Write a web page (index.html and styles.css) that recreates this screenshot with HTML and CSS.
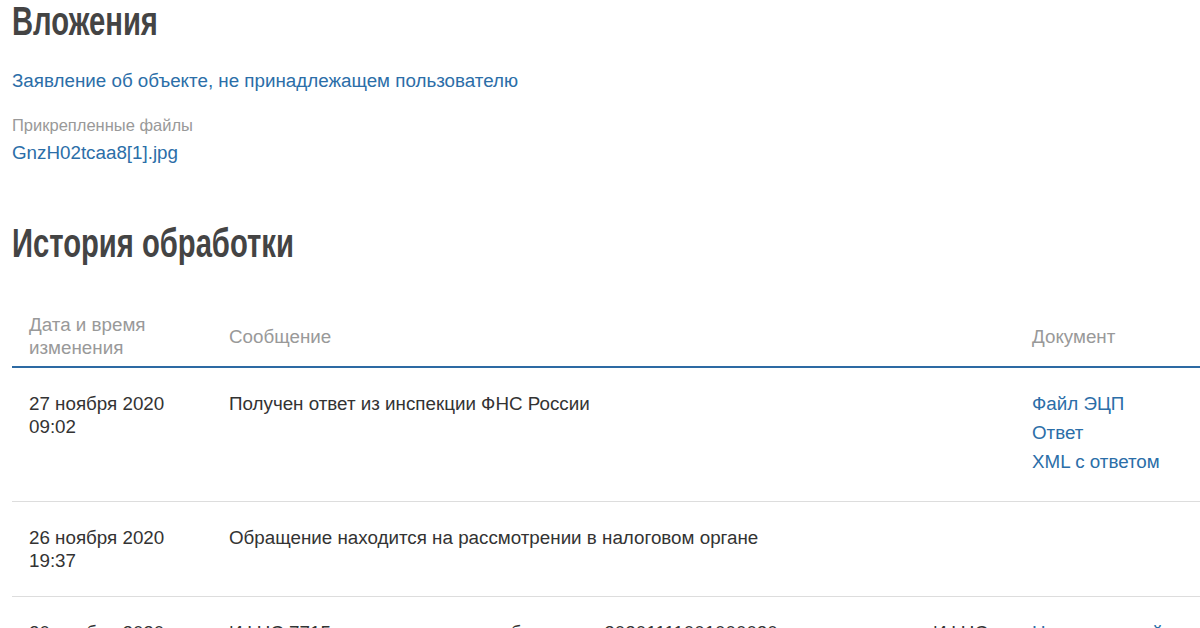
FILE: index.html
```html
<!DOCTYPE html>
<html>
	<head>
		<meta charset="utf-8">
		<title>Вложения</title>
		<link rel="stylesheet" href="styles.css">
	</head>
	<body>
		<div class="page">
			<h2 class="title"><span>Вложения</span></h2>
			<a class="link subject" href="#">Заявление об объекте, не принадлежащем пользователю</a>
			<div class="label">Прикрепленные файлы</div>
			<a class="link" href="#">GnzH02tcaa8[1].jpg</a>

			<h2 class="title history"><span>История обработки</span></h2>
			<table class="log">
				<colgroup>
					<col class="col-date">
					<col class="col-msg">
					<col class="col-doc">
				</colgroup>
				<thead>
					<tr>
						<th>Дата и время<br>изменения</th>
						<th>Сообщение</th>
						<th>Документ</th>
					</tr>
				</thead>
				<tbody>
					<tr>
						<td>27 ноября 2020<br>09:02</td>
						<td>Получен ответ из инспекции ФНС России</td>
						<td>
							<a class="doc" href="#">Файл ЭЦП</a>
							<a class="doc" href="#">Ответ</a>
							<a class="doc" href="#">XML с ответом</a>
						</td>
					</tr>
					<tr>
						<td>26 ноября 2020<br>19:37</td>
						<td>Обращение находится на рассмотрении в налоговом органе</td>
						<td></td>
					</tr>
					<tr>
						<td>20 ноября 2020<br>10:15</td>
						<td>ИФНС 7715 зарегистрировала обращение 20201111001000020, направленное в ИФНС</td>
						<td><a class="doc" href="#">Направленный</a></td>
					</tr>
				</tbody>
			</table>
		</div>
	</body>
</html>
```

FILE: styles.css
```css
* {
	margin: 0;
	padding: 0;
}

body {
	font-family: "Liberation Sans", Arial, sans-serif;
	font-size: 18.8px;
	color: #333333;
	background: #FFFFFF;
	overflow: hidden;
}

.page {
	padding-left: 12px;
	width: 1260px;
}

/* узкий заголовок: сжимаем обычный жирный шрифт */
.title {
	font-family: "Liberation Sans", Arial, sans-serif;
	font-size: 40px;
	font-weight: bold;
	line-height: 44px;
	color: #444444;
	margin-top: -1px;
}

.title span {
	display: inline-block;
	transform: scaleX(0.73);
	transform-origin: left center;
}

.link {
	display: block;
	color: #2b6ea8;
	text-decoration: none;
	line-height: 23px;
}

.subject {
	margin-top: 26px;
}

.label {
	margin-top: 24px;
	margin-bottom: 7px;
	font-size: 16.5px;
	line-height: 18px;
	color: #999999;
}

.history {
	margin-top: 57px;
}

.log {
	margin-top: 48px;
	width: 1260px;
	border-collapse: collapse;
	table-layout: fixed;
}

.col-date {
	width: 200px;
}

.col-msg {
	width: 803px;
}

.log th {
	font-weight: normal;
	text-align: left;
	color: #999999;
	line-height: 23px;
	padding: 0 17px 7px;
	border-bottom: 2px solid #2d6aa3;
	vertical-align: middle;
}

.log td {
	vertical-align: top;
	line-height: 23px;
	padding: 24px 17px 24px;
	border-bottom: 1px solid #dddddd;
}

.doc {
	display: block;
	color: #2b6ea8;
	text-decoration: none;
	margin-bottom: 6px;
}

.doc:last-child {
	margin-bottom: 4px;
}
```
